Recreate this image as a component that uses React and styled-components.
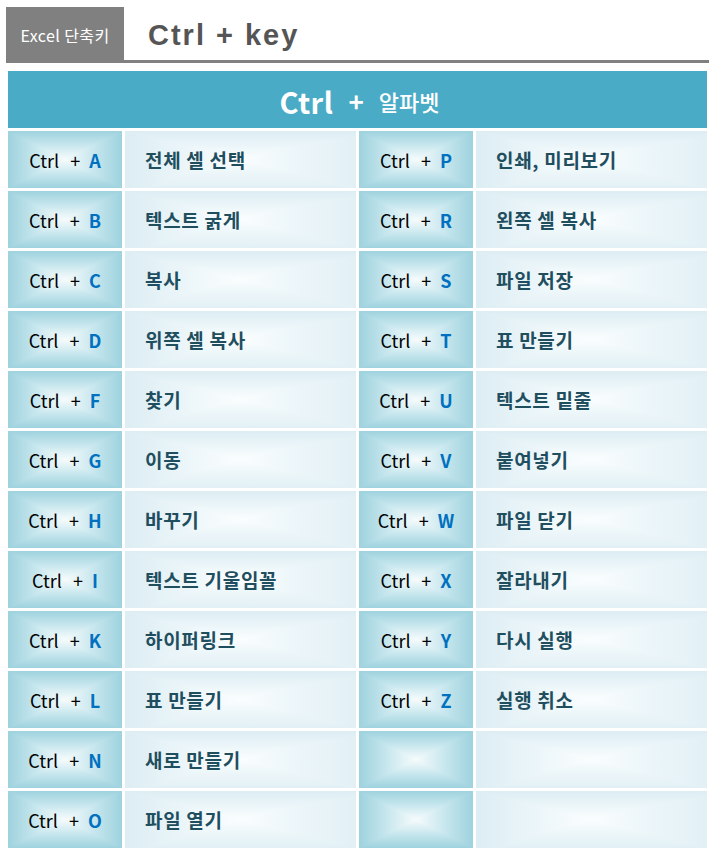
import React from "react";
import styled, { createGlobalStyle } from "styled-components";

const Global = createGlobalStyle`
  html, body { margin: 0; padding: 0; background: #fff; }
  body { font-family: "Noto Sans CJK KR", "Noto Sans", sans-serif; }
`;

const Page = styled.div`
  width: 709px;
  height: 850px;
  overflow: hidden;
`;

const Header = styled.header`
  display: flex;
  align-items: stretch;
  height: 53px;
  margin: 7px 0 0 6px;
  border-bottom: 3px solid #808080;
`;

const Badge = styled.div`
  width: 118px;
  background: #808080;
  color: #fff;
  font-size: 16px;
  letter-spacing: 0.4px;
  display: flex;
  align-items: center;
  justify-content: center;
  padding-top: 2px;
  box-sizing: border-box;
`;

const Title = styled.h1`
  margin: 0;
  padding: 4px 0 0 24px;
  display: flex;
  align-items: center;
  font-family: "Liberation Sans", Arial, sans-serif;
  font-weight: 700;
  font-size: 29px;
  letter-spacing: 2px;
  color: #555555;
`;

const Grid = styled.div`
  display: grid;
  grid-template-columns: 114px 231px 114px 231px;
  grid-auto-rows: 57px;
  gap: 3px;
  margin: 8px 0 0 8px;
`;

const Banner = styled.div`
  grid-column: 1 / -1;
  background: #4aabc6;
  color: #fff;
  display: flex;
  align-items: center;
  justify-content: center;
  gap: 15px;
  padding: 2px 0 0 4px;
`;

const BannerCtrl = styled.span`
  font-size: 29px;
  font-weight: 700;
  letter-spacing: 0.5px;
`;

const BannerPlus = styled.span`
  font-size: 26px;
  font-weight: 700;
`;

const BannerWord = styled.span`
  font-size: 22px;
  font-weight: 500;
`;

const KeyCell = styled.div`
  display: flex;
  align-items: center;
  justify-content: center;
  font-size: 18px;
  color: #000;
  background:
    linear-gradient(90deg, #9ed2de 0%, #c8e7ee 25%, #f6fbfc 50%, #c8e7ee 75%, #9ed2de 100%),
    linear-gradient(180deg, #9ed2de 0%, #c8e7ee 25%, #f6fbfc 50%, #c8e7ee 75%, #9ed2de 100%);
  background-blend-mode: darken;
`;

const Plus = styled.span`
  margin: 0 9px 0 11px;
`;

const Letter = styled.span`
  color: #0070c0;
  font-weight: 700;
`;

const DescCell = styled.div`
  display: flex;
  align-items: center;
  padding-left: 20px;
  font-size: 19px;
  letter-spacing: 0.7px;
  font-weight: 700;
  color: #1f4e5f;
  background:
    linear-gradient(90deg, #dcedf3 0%, #eef7fa 30%, #fbfdfe 50%, #eef7fa 70%, #e2f0f5 100%),
    linear-gradient(180deg, #dcedf3 0%, #eef7fa 30%, #fbfdfe 50%, #eef7fa 70%, #e2f0f5 100%);
  background-blend-mode: darken;
`;

const rows = [
  ["A", "전체 셀 선택", "P", "인쇄, 미리보기"],
  ["B", "텍스트 굵게", "R", "왼쪽 셀 복사"],
  ["C", "복사", "S", "파일 저장"],
  ["D", "위쪽 셀 복사", "T", "표 만들기"],
  ["F", "찾기", "U", "텍스트 밑줄"],
  ["G", "이동", "V", "붙여넣기"],
  ["H", "바꾸기", "W", "파일 닫기"],
  ["I", "텍스트 기울임꼴", "X", "잘라내기"],
  ["K", "하이퍼링크", "Y", "다시 실행"],
  ["L", "표 만들기", "Z", "실행 취소"],
  ["N", "새로 만들기", "", ""],
  ["O", "파일 열기", "", ""],
];

function Key({ letter }) {
  if (!letter) return <KeyCell />;
  return (
    <KeyCell>
      <span>Ctrl</span>
      <Plus>+</Plus>
      <Letter>{letter}</Letter>
    </KeyCell>
  );
}

export default function App() {
  return (
    <Page>
      <Global />
      <Header>
        <Badge>Excel 단축키</Badge>
        <Title>Ctrl + key</Title>
      </Header>
      <Grid>
        <Banner>
          <BannerCtrl>Ctrl</BannerCtrl>
          <BannerPlus>+</BannerPlus>
          <BannerWord>알파벳</BannerWord>
        </Banner>
        {rows.map(([k1, d1, k2, d2]) => (
          <React.Fragment key={k1}>
            <Key letter={k1} />
            <DescCell>{d1}</DescCell>
            <Key letter={k2} />
            <DescCell>{d2}</DescCell>
          </React.Fragment>
        ))}
      </Grid>
    </Page>
  );
}
